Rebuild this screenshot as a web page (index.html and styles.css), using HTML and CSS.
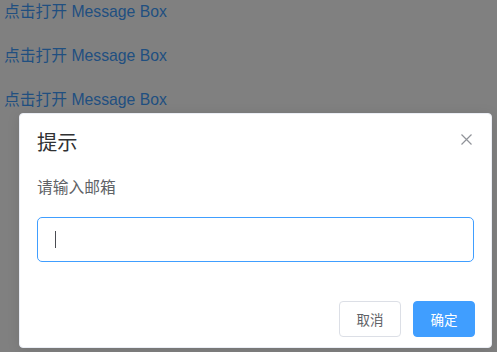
FILE: index.html
```html
<!DOCTYPE html>
<html lang="zh">
<head>
<meta charset="utf-8">
<title>Message Box</title>
<link rel="stylesheet" href="styles.css">
</head>
<body>
<div class="links">
  <a class="link">点击打开 Message Box</a>
  <a class="link">点击打开 Message Box</a>
  <a class="link">点击打开 Message Box</a>
</div>
<div class="box">
  <div class="box-header">
    <span class="box-title">提示</span>
    <svg class="box-close" width="11" height="11" viewBox="0 0 11 11"><path d="M0.5 0.5 L10.5 10.5 M10.5 0.5 L0.5 10.5" stroke="#909399" stroke-width="1.2" fill="none"/></svg>
  </div>
  <div class="box-content">
    <p class="box-message">请输入邮箱</p>
    <div class="box-input"><div class="input-inner"><span class="caret"></span></div></div>
    <div class="box-errormsg"></div>
  </div>
  <div class="box-btns">
    <button class="btn">取消</button>
    <button class="btn btn-primary">确定</button>
  </div>
</div>
</body>
</html>
```
FILE: styles.css
```css
html, body {
  margin: 0;
  padding: 0;
}
body {
  background: #808080;
  font-family: "Liberation Sans", "Noto Sans CJK SC", sans-serif;
  width: 497px;
  height: 352px;
  overflow: hidden;
  position: relative;
}
.links {
  display: flex;
  flex-direction: column;
  align-items: flex-start;
  gap: 21px;
  padding-left: 4px;
}
.link {
  color: #204f80;
  font-size: 15.75px;
  line-height: 23px;
  height: 23px;
  text-decoration: none;
}
.box {
  position: absolute;
  left: 19px;
  top: 113px;
  width: 473px;
  box-sizing: border-box;
  background: #fff;
  border: 1px solid #ebeef5;
  border-radius: 4px;
  box-shadow: 0 2px 13px rgba(0,0,0,.1);
  padding-bottom: 10px;
}
.box-header {
  display: flex;
  justify-content: space-between;
  align-items: flex-start;
  padding: 17px 17px 10px;
}
.box-title {
  font-size: 20.25px;
  line-height: 20px;
  height: 20px;
  color: #303133;
  padding-top: 2px;
}
.box-close {
  display: block;
  margin-top: 3px;
  margin-right: 2px;
}
.box-content {
  padding: 11px 17px;
}
.box-message {
  margin: 0;
  font-size: 15.75px;
  line-height: 27px;
  color: #606266;
}
.box-input {
  padding-top: 16px;
}
.input-inner {
  height: 45px;
  box-sizing: border-box;
  border: 1px solid #409eff;
  border-radius: 5px;
  padding-left: 17px;
  display: flex;
  align-items: center;
}
.caret {
  display: block;
  width: 1px;
  height: 17px;
  background: #4a4c52;
}
.box-errormsg {
  height: 22px;
}
.box-btns {
  display: flex;
  justify-content: flex-end;
  gap: 12px;
  padding: 6px 16px 0;
}
.btn {
  width: 62px;
  height: 36px;
  box-sizing: border-box;
  border: 1px solid #dcdfe6;
  border-radius: 4px;
  background: #fff;
  color: #606266;
  font-family: "Liberation Sans", "Noto Sans CJK SC", sans-serif;
  font-size: 13.5px;
  padding: 0;
}
.btn-primary {
  background: #409eff;
  border-color: #409eff;
  color: #fff;
}
```
